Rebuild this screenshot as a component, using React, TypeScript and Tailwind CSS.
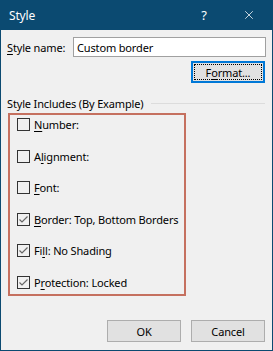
import { X } from "lucide-react";

const rows = [
  { pre: "", key: "N", post: "umber:", checked: false },
  { pre: "A", key: "l", post: "ignment:", checked: false },
  { pre: "", key: "F", post: "ont:", checked: false },
  { pre: "", key: "B", post: "order: Top, Bottom Borders", checked: true },
  { pre: "Fi", key: "l", post: "l: No Shading", checked: true },
  { pre: "P", key: "r", post: "otection: Locked", checked: true },
];

const CheckBox = ({ checked }: { checked: boolean }) => (
  <span className="w-[13px] h-[13px] border border-[#333333] bg-[#f0f0f0] flex items-center justify-center shrink-0">
    {checked && (
      <svg width="11" height="11" viewBox="0 0 11 11">
        <path d="M1.5 5.5 L4 8 L9.5 2.5" fill="none" stroke="#666666" strokeWidth="1.2" />
      </svg>
    )}
  </span>
);

const App = () => {
  return (
    <div
      className="w-[273px] h-[351px] bg-[#f0f0f0] flex flex-col text-[11px] leading-[17px] tracking-[-0.15px] text-black"
      style={{ fontFamily: '"Noto Sans", "Open Sans", sans-serif' }}
    >
      <div className="h-[30px] bg-[#0b4a71] text-white flex items-center pl-[9px] shrink-0">
        <span className="text-[12px] flex-1">Style</span>
        <span className="w-[12px] text-center text-[13px] mr-[32px]">?</span>
        <X className="w-[14px] h-[14px] mr-[17px]" strokeWidth={1.3} />
      </div>

      <div className="flex-1 border-x border-b border-[#0b4a71] flex flex-col px-[6px]">
        <div className="flex items-center mt-[7px]">
          <span className="w-[66px]">
            <span className="underline underline-offset-2">S</span>tyle name:
          </span>
          <div className="w-[193px] h-[20px] bg-white border border-[#a0a0a0] flex items-center px-[3px]">
            Custom border
          </div>
        </div>

        <div className="flex justify-end mt-[4px] pr-[1px]">
          <button className="w-[74px] h-[22px] border-2 border-[#0078d7] bg-[#e1e1e1] p-[1px]">
            <span className="w-full h-full border border-dotted border-black flex items-center justify-center">
              F<span className="underline underline-offset-2">o</span>rmat...
            </span>
          </button>
        </div>

        <div className="flex items-center mt-[12px] pr-[1px]">
          <span>Style Includes (By Example)</span>
          <div className="flex-1 h-px bg-[#dcdcdc] ml-[8px]"></div>
        </div>

        <div className="ml-[1px] mt-[1px] w-[178px] h-[183px] border-2 border-[#c5705f] flex flex-col justify-between pt-[3px] pb-[5px] pl-[7px]">
          {rows.map((r, i) => (
            <div key={i} className="flex items-center h-[13px] gap-[4px]">
              <CheckBox checked={r.checked} />
              <span className="whitespace-nowrap">
                {r.pre}
                <span className="underline underline-offset-2">{r.key}</span>
                {r.post}
              </span>
            </div>
          ))}
        </div>

        <div className="flex justify-end gap-[10px] mt-[24px] pr-[1px]">
          <button className="w-[74px] h-[22px] border border-[#adadad] bg-[#e1e1e1]">OK</button>
          <button className="w-[74px] h-[22px] border border-[#adadad] bg-[#e1e1e1]">Cancel</button>
        </div>
      </div>
    </div>
  );
};

export default App;
